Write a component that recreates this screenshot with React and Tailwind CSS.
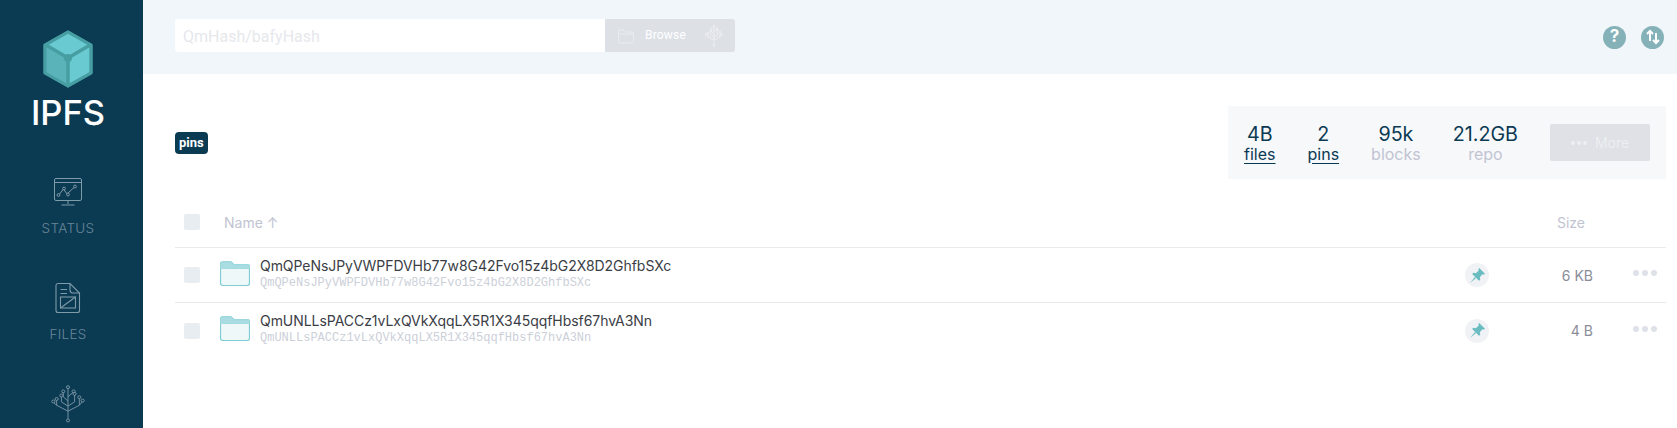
import React from 'react';

const inter = { fontFamily: 'Inter, sans-serif' };

const CubeLogo = () => (
  <svg className="shrink-0" width="52" height="58" viewBox="0 0 52 58">
    <path d="M26 2 L49 15 L49 43 L26 56 L3 43 L3 15 Z" fill="#6acad1" stroke="#469ea2" strokeWidth="3" strokeLinejoin="round" />
    <path d="M3 15 L26 28 L26 56 L3 43 Z" fill="#5bb3ba" />
    <path d="M3 15 L26 2 L49 15 L49 43 L26 56 L3 43 Z" fill="none" stroke="#469ea2" strokeWidth="3" strokeLinejoin="round" />
    <path d="M4 15 L26 28 L48 15 M26 28 L26 55" fill="none" stroke="#469ea2" strokeWidth="3.5" />
    <circle cx="26" cy="28" r="4" fill="#469ea2" />
  </svg>
);

const StatusIcon = () => (
  <svg width="30" height="30" viewBox="0 0 30 30" fill="none" stroke="#7f9aa9" strokeWidth="1">
    <rect x="1.5" y="1.5" width="27" height="22" rx="1.5" />
    <path d="M1.5 5.5 H28.5" />
    <path d="M15 23.5 V27 M8.5 28 H21.5" />
    <path d="M6.5 17 L10.5 12 L14 17 L21 10.5" />
    <circle cx="5.5" cy="18" r="1.4" fill="#0b3a53" />
    <circle cx="11" cy="11.5" r="1.4" fill="#0b3a53" />
    <circle cx="15" cy="17.5" r="1.4" fill="#0b3a53" />
    <circle cx="22" cy="9.5" r="1.4" fill="#0b3a53" />
  </svg>
);

const FilesIcon = () => (
  <svg width="26" height="32" viewBox="0 0 26 32" fill="none" stroke="#7f9aa9" strokeWidth="1.1">
    <path d="M3 1.5 H15 L24.5 11 V28.5 A2 2 0 0 1 22.5 30.5 H3 A2 2 0 0 1 1 28.5 V3.5 A2 2 0 0 1 3 1.5 Z" />
    <path d="M15 1.5 V8 A3 3 0 0 0 18 11 H24.5" />
    <path d="M5.5 7.5 H12 M5.5 11.5 H12" />
    <rect x="5.5" y="15" width="15" height="11" />
    <path d="M5.5 26 L20.5 15" />
  </svg>
);

const TreeIcon = ({ stroke = '#7f9aa9', width = 34, height = 38, weight = 1 }) => (
  <svg className="shrink-0" width={width} height={height} viewBox="0 0 36 45" preserveAspectRatio="none" fill="none" stroke={stroke} strokeWidth={weight}>
    <path d="M18 3.5 V40" />
    <path d="M18 31 L6 24 V18 M18 31 L30 24 V16" />
    <path d="M18 25 L11 20 V14 M18 25 L25 20 V12" />
    <path d="M18 19 L13 14 V9 M18 14 L23 9" />
    <path d="M6 24 L3 21 M30 24 L33 20" />
    <circle cx="18" cy="2.5" r="1.7" />
    <circle cx="18" cy="42" r="1.7" />
    <circle cx="13" cy="7.5" r="1.7" />
    <circle cx="24" cy="7.5" r="1.7" />
    <circle cx="6" cy="16.5" r="1.7" />
    <circle cx="11" cy="12.5" r="1.7" />
    <circle cx="25" cy="10.5" r="1.7" />
    <circle cx="30" cy="14.5" r="1.7" />
    <circle cx="2.5" cy="19.5" r="1.7" />
    <circle cx="33.5" cy="18.5" r="1.7" />
  </svg>
);

const NavItem = ({ icon, label }) => (
  <div className="flex flex-col items-center h-[106px] shrink-0">
    <div className="h-[32px] flex items-center justify-center">{icon}</div>
    <span className="mt-[12px] text-[13.5px] leading-[16px] font-light tracking-[0.3px] text-[#6a8698]" style={inter}>{label}</span>
  </div>
);

const FolderIcon = () => (
  <svg width="30" height="25" viewBox="0 0 30 27" preserveAspectRatio="none">
    <path d="M2.5 1 H11 L14 4 H28 A1.5 1.5 0 0 1 29.5 5.5 V24 A2.5 2.5 0 0 1 27 26.5 H3 A2.5 2.5 0 0 1 .5 24 V3 A2 2 0 0 1 2.5 1 Z" fill="#eff8f9" stroke="#7fcdd4" strokeWidth="1.2" />
    <path d="M2.5 1 H11 L14 4 H28 A1.5 1.5 0 0 1 29.5 5.5 V8 H.5 V3 A2 2 0 0 1 2.5 1 Z" fill="#a9dde2" stroke="#9cd8de" />
  </svg>
);

const PinBadge = () => (
  <div className="w-6 h-6 rounded-full bg-[#f0f2f5] flex items-center justify-center">
    <svg width="17" height="17" viewBox="0 0 16 16" fill="#69bcc0">
      <path d="M9.6 1 L15 6.4 L13.8 7.2 L12.6 6.8 L10.2 9.6 L10.6 12 L9.4 13 L3 6.6 L4 5.4 L6.4 5.8 L9.2 3.4 L8.8 2.2 Z" />
      <path d="M5.6 9.4 L1 15 L6.6 10.4 Z" />
    </svg>
  </div>
);

const Dots = () => (
  <div className="flex gap-[3px] -mt-[4px]">
    <span className="w-[6px] h-[6px] rounded-full bg-[#dfe1e8]" />
    <span className="w-[6px] h-[6px] rounded-full bg-[#dfe1e8]" />
    <span className="w-[6px] h-[6px] rounded-full bg-[#dfe1e8]" />
  </div>
);

const Stat = ({ value, label, active }) => (
  <div className="flex flex-col items-center" style={inter}>
    <span className="text-[19.7px] leading-[22px] pt-[1px] -mb-[1px] text-[#0b3a53]">{value}</span>
    <span className={`text-[16px] leading-[20px] ${active ? 'text-[#0b3a53] underline underline-offset-[3px]' : 'text-[#c1c4d2]'}`}>{label}</span>
  </div>
);

const rows = [
  { hash: 'QmQPeNsJPyVWPFDVHb77w8G42Fvo15z4bG2X8D2GhfbSXc', size: '6 KB' },
  { hash: 'QmUNLLsPACCz1vLxQVkXqqLX5R1X345qqfHbsf67hvA3Nn', size: '4 B' },
];

export default function App() {
  return (
    <div className="flex h-screen overflow-hidden bg-white">
      {/* Sidebar */}
      <div className="w-[143px] shrink-0 bg-[#0b3a53] flex flex-col items-center pt-[30px] pr-[7px]">
        <CubeLogo />
        <div className="shrink-0 text-[34.5px] leading-[42px] font-[550] text-white mt-[4px] mb-[42px]" style={inter}>IPFS</div>
        <NavItem icon={<StatusIcon />} label="STATUS" />
        <NavItem icon={<FilesIcon />} label="FILES" />
        <div className="-mt-[3px]"><TreeIcon /></div>
      </div>

      <div className="flex-1 min-w-0 flex flex-col">
        {/* Top bar */}
        <div className="h-[74px] shrink-0 bg-[#f0f6fa] flex items-center justify-between pl-[32px] pr-[13px]">
          <div className="flex h-[33px] w-[560px] mb-[3px]">
            <div className="w-[430px] bg-white rounded-l-[3px] pl-[8px] pt-[2px] flex items-center text-[16px] text-[#e6e8ec]" style={{ fontFamily: 'Roboto, sans-serif' }}>QmHash/bafyHash</div>
            <div className="flex-1 bg-[#dde1e6] rounded-r-[3px] flex items-center pl-[13px] text-[12px] text-white" style={{ fontFamily: 'Roboto, sans-serif' }}>
              <svg className="mt-[2px]" width="16" height="15" viewBox="0 0 16 15" fill="none" stroke="#e9ecef" strokeWidth="1">
                <path d="M1.5 1 H6 L8 3 H14 A1.5 1.5 0 0 1 15.5 4.5 V12.5 A1.5 1.5 0 0 1 14 14 H2 A1.5 1.5 0 0 1 .5 12.5 V2 A1 1 0 0 1 1.5 1 Z M.5 5 H15.5" />
              </svg>
              <span className="ml-[11px] tracking-[0.2px] -mt-[1px]">Browse</span>
              <div className="ml-[19px]"><TreeIcon stroke="#eef0f3" width={18} height={22} weight={1.7} /></div>
            </div>
          </div>
          <div className="flex items-center gap-[15px]">
            <div className="w-[23px] h-[23px] rounded-full bg-[#85b2b8] flex items-center justify-center text-white text-[17px] font-bold" style={inter}>?</div>
            <div className="w-[23px] h-[23px] rounded-full bg-[#85b2b8] flex items-center justify-center">
              <svg width="14" height="16" viewBox="0 0 14 16" fill="none" stroke="#fff" strokeWidth="2">
                <path d="M4 12 V2 M1 5 L4 2 L7 5" />
                <path d="M10 4 V14 M7 11 L10 14 L13 11" />
              </svg>
            </div>
          </div>
        </div>

        {/* Content */}
        <div className="pl-[32px] pr-[11px] pt-[32px]">
          <div className="flex items-center justify-between">
            <span className="bg-[#0b3a53] text-white text-[13px] leading-[22px] font-bold rounded-[4px] px-[4px]" style={{ fontFamily: 'Roboto, sans-serif' }}>pins</span>
            <div className="h-[73px] bg-[#f7f8fa] flex items-center gap-[32px] px-[16px]">
              <Stat value="4B" label="files" active />
              <Stat value="2" label="pins" active />
              <Stat value="95k" label="blocks" />
              <Stat value="21.2GB" label="repo" />
              <div className="w-[100px] h-[37px] bg-[#dfe1e6] rounded-[2px] flex items-center justify-center gap-[8px] text-[14px] text-[#eceef1]" style={inter}>
                <span className="flex gap-[2px]">
                  <span className="w-[4px] h-[4px] rounded-full bg-[#eceef1]" />
                  <span className="w-[4px] h-[4px] rounded-full bg-[#eceef1]" />
                  <span className="w-[4px] h-[4px] rounded-full bg-[#eceef1]" />
                </span>
                More
              </div>
            </div>
          </div>

          {/* Table */}
          <div className="mt-[16px] text-[14px]" style={inter}>
            <div className="h-[53px] flex items-center border-b border-[#e8eaed] pl-[9px] pt-[2px] text-[#c1c4d2]">
              <span className="w-[16px] h-[16px] rounded-[2px] bg-[#e8edf1]" />
              <span className="ml-[24px] flex-1">Name ↑</span>
              <span className="mr-[81px]">Size</span>
            </div>
            {rows.map((row) => (
              <div key={row.hash} className="h-[55px] flex items-center border-b border-[#e8eaed] last:border-b-0 pl-[9px]">
                <span className="w-[16px] h-[16px] rounded-[2px] bg-[#e8edf1]" />
                <div className="ml-[20px] -mt-[4px] flex"><FolderIcon /></div>
                <div className="ml-[10px] flex-1 min-w-0 flex flex-col -mt-[2px]">
                  <span className="text-[14px] leading-[16px] tracking-[-0.05px] text-[#3a3d45]">{row.hash}</span>
                  <span className="mt-[2px] text-[12px] leading-[15px] text-[#ccd0d9]" style={{ fontFamily: '"Liberation Mono", monospace' }}>{row.hash}</span>
                </div>
                <div className="-ml-[1px]"><PinBadge /></div>
                <span className="w-[104px] text-right text-[#8a8d99]">{row.size}</span>
                <div className="ml-[40px] mr-[9px]"><Dots /></div>
              </div>
            ))}
          </div>
        </div>
      </div>
    </div>
  );
}
